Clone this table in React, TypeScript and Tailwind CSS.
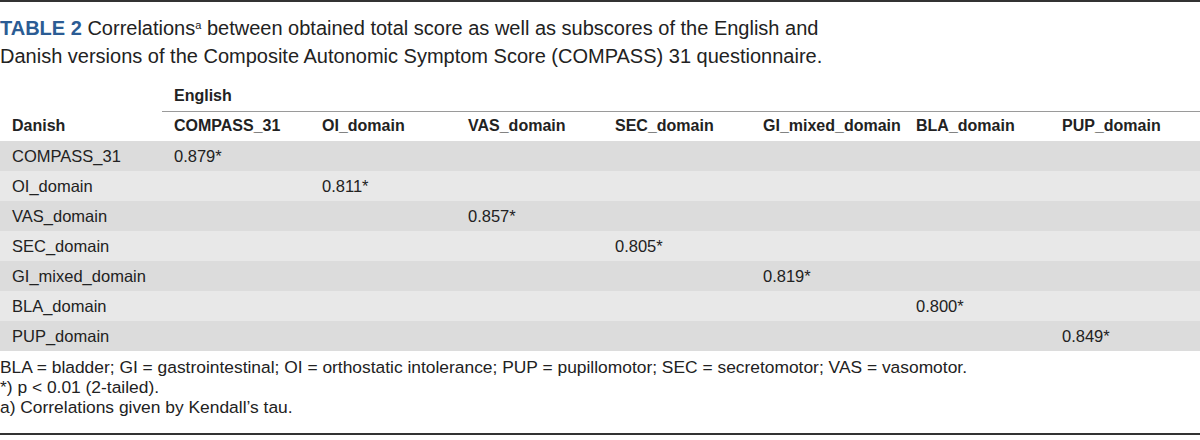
const cols = ["COMPASS_31", "OI_domain", "VAS_domain", "SEC_domain", "GI_mixed_domain", "BLA_domain", "PUP_domain"];
const values = ["0.879*", "0.811*", "0.857*", "0.805*", "0.819*", "0.800*", "0.849*"];
const widths = ["w-[162px]", "w-[148px]", "w-[146px]", "w-[147px]", "w-[148px]", "w-[153px]", "w-[146px]", "w-[150px]"];

export default function App() {
    return (
        <div className="w-[1200px] h-[440px] bg-white text-[#222] font-['Liberation_Sans',Arial,sans-serif] overflow-hidden">
            <div className="border-t-2 border-[#333] pt-[14px]">
                {/* Caption */}
                <p className="text-[20px] leading-[25px] whitespace-nowrap">
                    <span className="font-bold text-[#2b5c94]">TABLE 2</span> Correlations
                    <span className="text-[11px] relative -top-[6px]">a</span> between obtained total score as well as subscores of the English and
                    <br />
                    Danish versions of the Composite Autonomic Symptom Score (COMPASS) 31 questionnaire.
                </p>

                <table className="mt-[15px] w-full table-fixed border-collapse text-[16.5px] whitespace-nowrap">
                    <colgroup>
                        {widths.map((w, i) => (
                            <col key={i} className={w} />
                        ))}
                    </colgroup>
                    <thead className="text-[16px]">
                        <tr className="h-[27px]">
                            <th />
                            <th colSpan={7} className="border-b border-[#9a9a9a] pl-[12px] text-left font-bold align-top">
                                English
                            </th>
                        </tr>
                        <tr className="h-[30px]">
                            <th className="pl-[12px] text-left font-bold">Danish</th>
                            {cols.map((c) => (
                                <th key={c} className="pl-[12px] text-left font-bold">
                                    {c}
                                </th>
                            ))}
                        </tr>
                    </thead>
                    <tbody>
                        {cols.map((c, r) => (
                            <tr key={c} className={r % 2 === 0 ? "h-[30px] bg-[#dcdcdc]" : "h-[30px] bg-[#e8e8e8]"}>
                                <td className="pl-[12px]">{c}</td>
                                {cols.map((_, k) => (
                                    <td key={k} className="pl-[12px]">
                                        {k === r ? values[r] : ""}
                                    </td>
                                ))}
                            </tr>
                        ))}
                    </tbody>
                </table>

                {/* Footnotes */}
                <div className="mt-[6px] text-[17.4px] leading-[20px] whitespace-nowrap">
                    <p>BLA = bladder; GI = gastrointestinal; OI = orthostatic intolerance; PUP = pupillomotor; SEC = secretomotor; VAS = vasomotor.</p>
                    <p>*) p &lt; 0.01 (2-tailed).</p>
                    <p>a) Correlations given by Kendall’s tau.</p>
                </div>
                <div className="mt-[16px] border-t-2 border-[#333]" />
            </div>
        </div>
    );
}
